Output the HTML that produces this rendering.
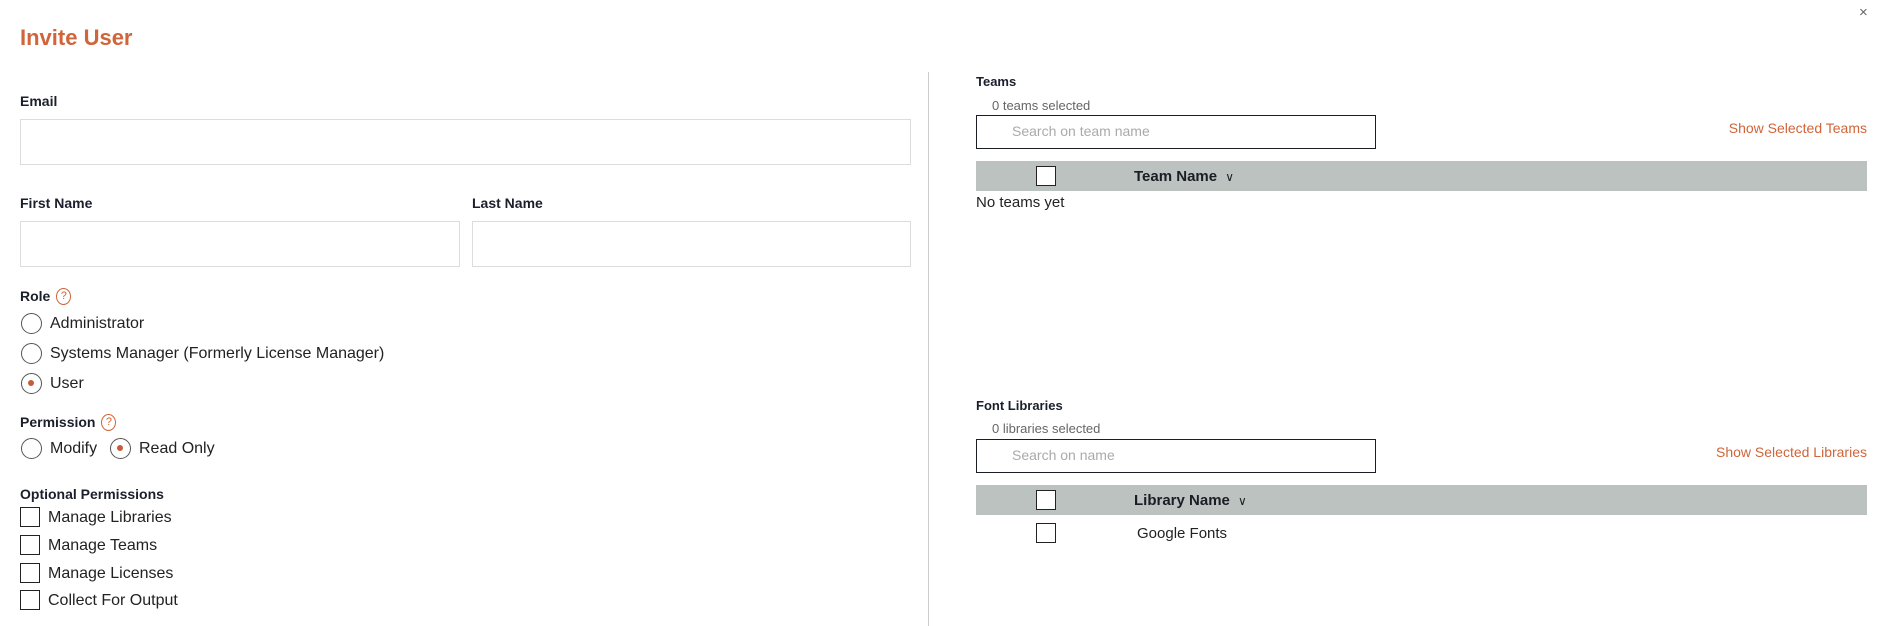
<!DOCTYPE html>
<html><head><meta charset="utf-8"><style>
*{box-sizing:border-box;margin:0;padding:0}
body{width:1885px;height:626px;background:#fff;font-family:"Liberation Sans",sans-serif;color:#1a1d24;position:relative;overflow:hidden}
.a{position:absolute;white-space:nowrap}
.lbl{font-weight:bold;font-size:14px;color:#1a1f2b}
.t{font-size:16px;color:#222}
.inp{position:absolute;border:1.5px solid #dcdcdc;background:#fff}
.rad{position:absolute;width:21px;height:21px;border:1.3px solid #555;border-radius:50%}
.rad.on::after{content:"";position:absolute;left:6px;top:6px;width:6px;height:6px;border-radius:50%;background:#c95c36}
.cb{position:absolute;width:20px;height:20px;border:1.5px solid #222;background:#fff}
.q{display:inline-block;width:15px;height:17px;border:1.3px solid #d0643a;border-radius:50%;color:#d0643a;font-size:11px;text-align:center;line-height:15px;font-weight:normal;vertical-align:2px;margin-left:6px}
.srch{position:absolute;border:1.5px solid #1a1d24;background:#fff;color:#aaa;font-size:14px;padding-left:35px}
.hdr{position:absolute;background:#bcc2bf;left:976px;width:891px}
.org{color:#d0643a;font-size:14px}
</style></head><body>
<div class="a" style="left:20px;top:25px;font-size:22px;font-weight:bold;color:#d0643a">Invite User</div>
<div class="a" style="left:1859px;top:4px;font-size:15px;color:#666">×</div>

<div class="a lbl" style="left:20px;top:93px">Email</div>
<div class="inp" style="left:20px;top:119px;width:891px;height:46px"></div>
<div class="a lbl" style="left:20px;top:195px">First Name</div>
<div class="a lbl" style="left:472px;top:195px">Last Name</div>
<div class="inp" style="left:20px;top:221px;width:440px;height:46px"></div>
<div class="inp" style="left:472px;top:221px;width:439px;height:46px"></div>

<div class="a lbl" style="left:20px;top:288px">Role<span class="q">?</span></div>
<div class="rad" style="left:21px;top:313px"></div><div class="a t" style="left:50px;top:315px">Administrator</div>
<div class="rad" style="left:21px;top:343px"></div><div class="a t" style="left:50px;top:345px">Systems Manager (Formerly License Manager)</div>
<div class="rad on" style="left:21px;top:373px"></div><div class="a t" style="left:50px;top:375px">User</div>

<div class="a lbl" style="left:20px;top:414px">Permission<span class="q">?</span></div>
<div class="rad" style="left:21px;top:438px"></div><div class="a t" style="left:50px;top:440px">Modify</div>
<div class="rad on" style="left:110px;top:438px"></div><div class="a t" style="left:139px;top:440px">Read Only</div>

<div class="a lbl" style="left:20px;top:486px">Optional Permissions</div>
<div class="cb" style="left:20px;top:507px"></div><div class="a t" style="left:48px;top:509px">Manage Libraries</div>
<div class="cb" style="left:20px;top:535px"></div><div class="a t" style="left:48px;top:537px">Manage Teams</div>
<div class="cb" style="left:20px;top:563px"></div><div class="a t" style="left:48px;top:565px">Manage Licenses</div>
<div class="cb" style="left:20px;top:590px"></div><div class="a t" style="left:48px;top:592px">Collect For Output</div>

<div class="a" style="left:928px;top:72px;width:1px;height:554px;background:#ccc"></div>

<div class="a lbl" style="left:976px;top:74px;font-size:13px">Teams</div>
<div class="a" style="left:992px;top:98px;font-size:13px;color:#666">0 teams selected</div>
<div class="srch" style="left:976px;top:115px;width:400px;height:34px;line-height:31px">Search on team name</div>
<div class="a org" style="right:18px;top:120px">Show Selected Teams</div>
<div class="hdr" style="top:161px;height:30px"></div>
<div class="cb" style="left:1036px;top:166px"></div>
<div class="a" style="left:1134px;top:168px;font-size:15px;font-weight:bold">Team Name <span style="font-weight:normal;font-size:12px;margin-left:4px">&#8744;</span></div>
<div class="a t" style="left:976px;top:194px;font-size:15px">No teams yet</div>

<div class="a lbl" style="left:976px;top:398px;font-size:13px">Font Libraries</div>
<div class="a" style="left:992px;top:421px;font-size:13px;color:#666">0 libraries selected</div>
<div class="srch" style="left:976px;top:439px;width:400px;height:34px;line-height:31px">Search on name</div>
<div class="a org" style="right:18px;top:444px">Show Selected Libraries</div>
<div class="hdr" style="top:485px;height:30px"></div>
<div class="cb" style="left:1036px;top:490px"></div>
<div class="a" style="left:1134px;top:492px;font-size:15px;font-weight:bold">Library Name <span style="font-weight:normal;font-size:12px;margin-left:4px">&#8744;</span></div>
<div class="cb" style="left:1036px;top:523px"></div>
<div class="a t" style="left:1137px;top:525px;font-size:15px">Google Fonts</div>
</body></html>
